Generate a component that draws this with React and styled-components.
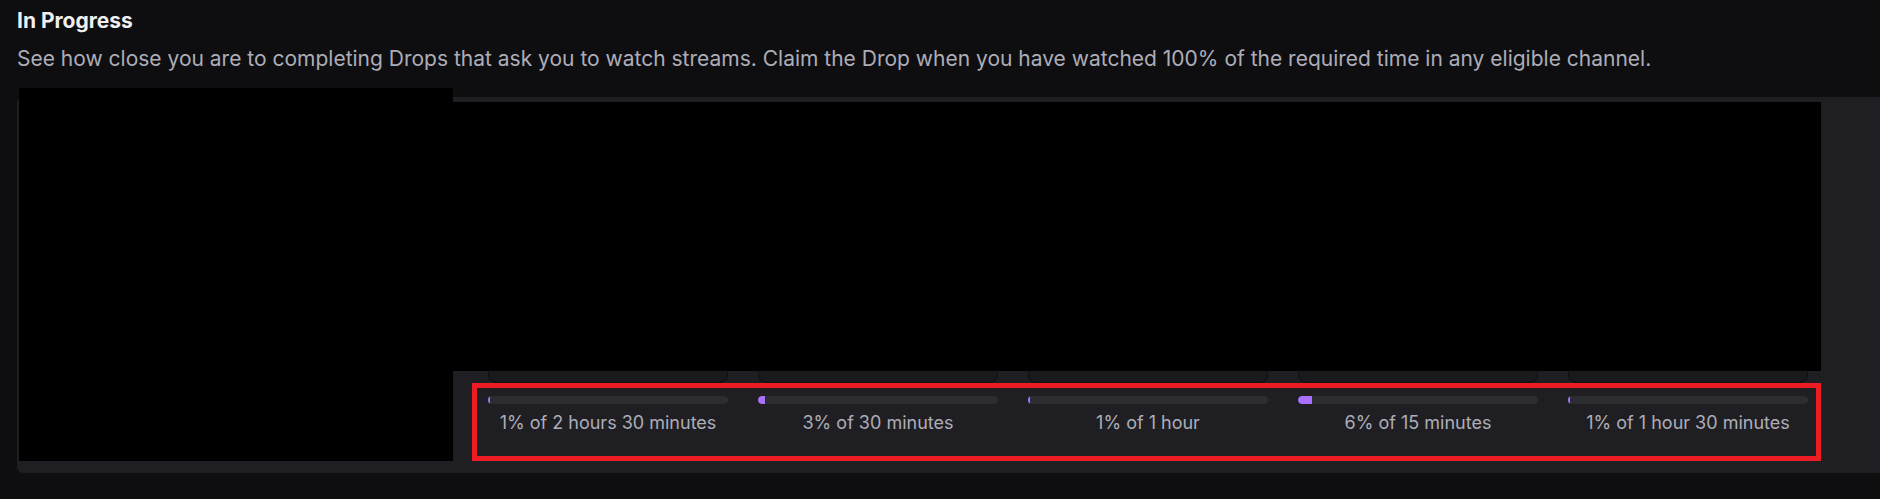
import React from 'react';
import styled, { createGlobalStyle } from 'styled-components';

const drops = [
  { percent: 1, label: '1% of 2 hours 30 minutes' },
  { percent: 3, label: '3% of 30 minutes' },
  { percent: 1, label: '1% of 1 hour' },
  { percent: 6, label: '6% of 15 minutes' },
  { percent: 1, label: '1% of 1 hour 30 minutes' },
];

const App = () => {
  return (
    <>
      <GlobalStyle />
      <Page>
        <Title>In Progress</Title>
        <Description>
          See how close you are to completing Drops that ask you to watch streams. Claim the Drop when you have
          watched 100% of the required time in any eligible channel.
        </Description>
        <Card>
          <Redacted />
          <RightColumn>
            <RedactedWide />
            <DropGrid>
              {drops.map((drop, i) => (
                <DropColumn key={i}>
                  <CardTail />
                  <ProgressTrack>
                    {/* fill width comes from data */}
                    <ProgressFill style={{ width: `${drop.percent}%` }} />
                  </ProgressTrack>
                  <ProgressLabel>{drop.label}</ProgressLabel>
                </DropColumn>
              ))}
              <Highlight />
            </DropGrid>
          </RightColumn>
        </Card>
      </Page>
    </>
  );
};

const GlobalStyle = createGlobalStyle`
  html, body {
    margin: 0;
    padding: 0;
    background: #0e0e10;
    overflow: hidden;
  }
  body {
    font-family: Inter, "Noto Sans", "Liberation Sans", sans-serif;
  }
`;

const Page = styled.div`
  min-height: 499px;
  padding: 8px 0 0 17px;
  box-sizing: border-box;
  background: #0e0e10;
`;

const Title = styled.h2`
  margin: 0;
  font-size: 21px;
  line-height: 25px;
  font-weight: 700;
  color: #efeff1;
`;

const Description = styled.p`
  margin: 13px 0 0;
  font-size: 21px;
  line-height: 25px;
  font-weight: 400;
  color: #adadb8;
  white-space: nowrap;
`;

const Card = styled.div`
  display: flex;
  align-items: flex-start;
  margin-top: 26px;
  margin-right: -40px;
  padding: 0 0 12px 2px;
  background: #1f1f23;
  border-radius: 6px 0 0 6px;
`;

const Redacted = styled.div`
  flex-shrink: 0;
  width: 434px;
  height: 373px;
  margin-top: -9px;
  background: #000;
`;

const RightColumn = styled.div`
  flex-shrink: 0;
  width: 1368px;
  padding-top: 5px;
`;

const RedactedWide = styled.div`
  height: 269px;
  background: #000;
`;

const DropGrid = styled.div`
  position: relative;
  display: grid;
  grid-template-columns: repeat(5, 240px);
  column-gap: 30px;
  padding-left: 35px;
  height: 79px;
`;

const DropColumn = styled.div`
  display: flex;
  flex-direction: column;
  align-items: stretch;
`;

const CardTail = styled.div`
  height: 11px;
  background: #1a1a1d;
  border: 1px solid #111113;
  border-top: none;
  border-radius: 0 0 8px 8px;
`;

const ProgressTrack = styled.div`
  height: 8px;
  margin-top: 13px;
  border-radius: 4px;
  background: #2c2c31;
  overflow: hidden;
`;

const ProgressFill = styled.div`
  height: 100%;
  background: #a970ff;
  border-radius: 4px 0 0 4px;
`;

const ProgressLabel = styled.div`
  margin-top: 8px;
  font-size: 18px;
  line-height: 22px;
  color: #adadb8;
  text-align: center;
  white-space: nowrap;
`;

const Highlight = styled.div`
  position: absolute;
  top: 12px;
  left: 19px;
  right: 0;
  height: 78px;
  border: 5px solid #ed1c24;
  box-sizing: border-box;
  pointer-events: none;
`;

export default App;
